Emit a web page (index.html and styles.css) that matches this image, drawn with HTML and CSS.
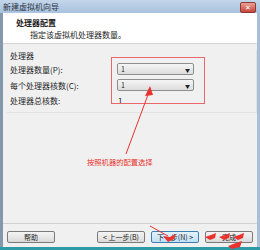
FILE: index.html
```html
<!DOCTYPE html>
<html lang="zh-CN">
<head>
  <meta charset="UTF-8" />
  <title>新建虚拟机向导</title>
  <link rel="stylesheet" href="styles.css">
</head>
<body>
  <div class="window">
    <div class="title-bar">
      <span class="title">新建虚拟机向导</span>
      <span class="close">✕</span>
    </div>
    <div class="frame">
      <div class="header">
        <div class="header-title">处理器配置</div>
        <div class="header-sub">指定该虚拟机处理器数量。</div>
      </div>
      <div class="content">
        <div class="group">
          <div class="group-label">处理器</div>
          <div class="row">
            <span class="label">处理器数量(P):</span>
            <div class="select"><span>1</span><span class="caret">▼</span></div>
          </div>
          <div class="row">
            <span class="label">每个处理器核数(C):</span>
            <div class="select"><span>1</span><span class="caret">▼</span></div>
          </div>
          <div class="row">
            <span class="label">处理器总核数:</span>
            <span class="value">1</span>
          </div>
        </div>
      </div>
      <div class="footer">
        <button class="btn">帮助</button>
        <div class="nav">
          <button class="btn">&lt; 上一步(B)</button>
          <button class="btn default">下一步(N) &gt;</button>
          <button class="btn">完成</button>
        </div>
      </div>
    </div>
    <div class="taskbar"></div>

    <!-- annotations drawn over the dialog -->
    <div class="mark-box"></div>
    <svg class="mark-arrow" width="260" height="250" viewBox="0 0 260 250">
      <line x1="126" y1="154" x2="149" y2="92" stroke="#e8332e" stroke-width="1" />
      <polygon points="150,86 145,96 153,95" fill="#e8332e" />
      <line x1="150" y1="226" x2="168" y2="236" stroke="#e8332e" stroke-width="1" />
      <g fill="#e8332e">
        <polygon points="163,236 170,237 176,234 174,239 168,242" />
        <polygon points="205,237 211,235 216,233 215,238 210,240" />
        <polygon points="219,237 225,235 230,233 229,238 224,240" />
        <polygon points="233,237 239,235 244,233 243,238 238,240" />
        <polygon points="228,246 236,243 242,241 240,247 232,249" />
      </g>
    </svg>
    <div class="mark-text">按照机器的配置选择</div>
  </div>
</body>
</html>
```

FILE: styles.css
```css
body {
  margin: 0;
  font-family: "Noto Sans CJK SC", "Liberation Sans", sans-serif;
  font-size: 8px;
  color: #1e1e1e;
  background: #fff;
}

.window {
  position: relative;
  width: 260px;
  height: 250px;
  display: flex;
  flex-direction: column;
  overflow: hidden;
}

.title-bar {
  height: 13px;
  background: linear-gradient(to bottom, #c3d6ea, #a8c1dd);
  display: flex;
  justify-content: space-between;
  align-items: center;
  padding: 0 4px 0 3px;
  color: #2b3440;
}

.title {
  font-size: 8px;
  line-height: 13px;
}

.close {
  width: 14px;
  height: 9px;
  margin-top: 1px;
  background: linear-gradient(to bottom, #eaa094, #c9443a);
  border: 1px solid #8c3a32;
  border-radius: 2px;
  color: #fff;
  font-size: 7px;
  line-height: 9px;
  text-align: center;
}

.frame {
  flex: 1;
  display: flex;
  flex-direction: column;
  border-left: 3px solid #8597ad;
  border-right: 3px solid #a9bfd8;
  background: #f0f0f0;
}

.header {
  height: 30px;
  background: #fff;
  border-bottom: 1px solid #d5d5d5;
  padding-left: 13px;
}

.header-title {
  font-weight: bold;
  margin-top: 5px;
  line-height: 10px;
}

.header-sub {
  padding-left: 14px;
  margin-top: 2px;
  line-height: 10px;
}

.content {
  flex: 1;
  padding: 6px 0 0 4px;
}

.group {
  border-right: 1px solid #e2e2e2;
  border-bottom: 1px solid #e2e2e2;
  height: 62px;
  display: flex;
  flex-direction: column;
}

.group-label {
  padding-left: 3px;
  line-height: 11px;
}

.row {
  display: flex;
  align-items: center;
  height: 16px;
  padding-left: 3px;
}

.row:last-child {
  height: 14px;
}

.label {
  width: 107px;
}

.select {
  width: 69px;
  height: 10px;
  border: 1px solid #8e8e8e;
  border-radius: 2px;
  background: linear-gradient(to bottom, #f6f6f6, #dcdcdc);
  display: flex;
  justify-content: space-between;
  align-items: center;
  padding: 0 3px;
  font-size: 7px;
}

.caret {
  font-size: 5px;
}

.value {
  padding-left: 1px;
}

.footer {
  height: 21px;
  border-top: 1px solid #d0d0d0;
  display: flex;
  justify-content: space-between;
  align-items: center;
  padding: 2px 4px 0;
}

.nav {
  display: flex;
  gap: 6px;
}

.btn {
  width: 48px;
  height: 12px;
  padding: 0;
  font-family: inherit;
  font-size: 7px;
  color: #222;
  border: 1px solid #7a7a7a;
  border-radius: 2px;
  background: linear-gradient(to bottom, #f4f4f4, #dadada);
}

.btn.default {
  border-color: #3c7fb1;
  background: linear-gradient(to bottom, #e4f2fb, #bfe0f5);
}

.taskbar {
  height: 3px;
  background: #2d9aa6;
}

.mark-box {
  position: absolute;
  left: 111px;
  top: 57px;
  width: 92px;
  height: 45px;
  border: 1px solid #e8676a;
}

.mark-arrow {
  position: absolute;
  left: 0;
  top: 0;
}

.mark-text {
  position: absolute;
  left: 87px;
  top: 157px;
  color: #e8332e;
  font-size: 7.3px;
  line-height: 10px;
}
```
